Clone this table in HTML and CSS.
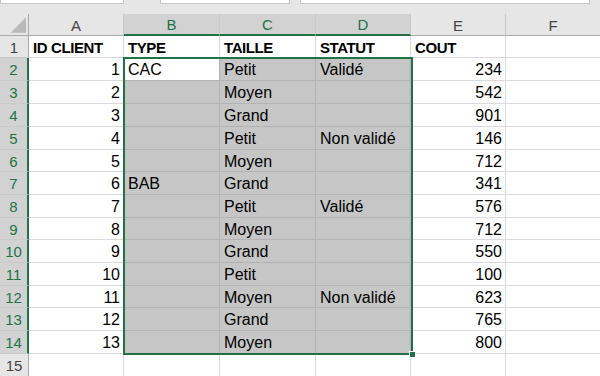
FILE: index.html
```html
<!DOCTYPE html>
<html>
<head>
   <meta charset="UTF-8">
   <title>Classeur</title>
   <link rel="stylesheet" href="styles.css">
</head>
<body>
   <div class="formula-strip">
       <div class="box name-box"></div>
       <div class="box fx-box"></div>
       <div class="box bar-box"></div>
   </div>

   <div class="sheet">
       <!-- column headers -->
       <div class="hd corner">
           <svg width="29" height="22" viewBox="0 0 29 22"><polygon points="27,3 27,19 11,19" fill="#b9b9b9"/></svg>
       </div>
       <div class="hd col">A</div>
       <div class="hd col sel">B</div>
       <div class="hd col sel">C</div>
       <div class="hd col sel">D</div>
       <div class="hd col">E</div>
       <div class="hd col">F</div>

       <!-- row 1 -->
       <div class="hd row">1</div>
       <div class="c b">ID CLIENT</div>
       <div class="c b">TYPE</div>
       <div class="c b">TAILLE</div>
       <div class="c b">STATUT</div>
       <div class="c b">COUT</div>
       <div class="c"></div>

       <div class="hd row sel">2</div>
       <div class="c n">1</div>
       <div class="c active">CAC</div>
       <div class="c s">Petit</div>
       <div class="c s">Validé</div>
       <div class="c n">234</div>
       <div class="c"></div>

       <div class="hd row sel">3</div>
       <div class="c n">2</div>
       <div class="c s"></div>
       <div class="c s">Moyen</div>
       <div class="c s"></div>
       <div class="c n">542</div>
       <div class="c"></div>

       <div class="hd row sel">4</div>
       <div class="c n">3</div>
       <div class="c s"></div>
       <div class="c s">Grand</div>
       <div class="c s"></div>
       <div class="c n">901</div>
       <div class="c"></div>

       <div class="hd row sel">5</div>
       <div class="c n">4</div>
       <div class="c s"></div>
       <div class="c s">Petit</div>
       <div class="c s">Non validé</div>
       <div class="c n">146</div>
       <div class="c"></div>

       <div class="hd row sel">6</div>
       <div class="c n">5</div>
       <div class="c s"></div>
       <div class="c s">Moyen</div>
       <div class="c s"></div>
       <div class="c n">712</div>
       <div class="c"></div>

       <div class="hd row sel">7</div>
       <div class="c n">6</div>
       <div class="c s">BAB</div>
       <div class="c s">Grand</div>
       <div class="c s"></div>
       <div class="c n">341</div>
       <div class="c"></div>

       <div class="hd row sel">8</div>
       <div class="c n">7</div>
       <div class="c s"></div>
       <div class="c s">Petit</div>
       <div class="c s">Validé</div>
       <div class="c n">576</div>
       <div class="c"></div>

       <div class="hd row sel">9</div>
       <div class="c n">8</div>
       <div class="c s"></div>
       <div class="c s">Moyen</div>
       <div class="c s"></div>
       <div class="c n">712</div>
       <div class="c"></div>

       <div class="hd row sel">10</div>
       <div class="c n">9</div>
       <div class="c s"></div>
       <div class="c s">Grand</div>
       <div class="c s"></div>
       <div class="c n">550</div>
       <div class="c"></div>

       <div class="hd row sel">11</div>
       <div class="c n">10</div>
       <div class="c s"></div>
       <div class="c s">Petit</div>
       <div class="c s"></div>
       <div class="c n">100</div>
       <div class="c"></div>

       <div class="hd row sel">12</div>
       <div class="c n">11</div>
       <div class="c s"></div>
       <div class="c s">Moyen</div>
       <div class="c s">Non validé</div>
       <div class="c n">623</div>
       <div class="c"></div>

       <div class="hd row sel">13</div>
       <div class="c n">12</div>
       <div class="c s"></div>
       <div class="c s">Grand</div>
       <div class="c s"></div>
       <div class="c n">765</div>
       <div class="c"></div>

       <div class="hd row sel">14</div>
       <div class="c n">13</div>
       <div class="c s"></div>
       <div class="c s">Moyen</div>
       <div class="c s"></div>
       <div class="c n">800</div>
       <div class="c"></div>

       <div class="hd row">15</div>
       <div class="c"></div>
       <div class="c"></div>
       <div class="c"></div>
       <div class="c"></div>
       <div class="c"></div>
       <div class="c"></div>

       <!-- selection B2:D14 -->
       <div class="selection"><span class="handle"></span></div>
   </div>
</body>
</html>
```

FILE: styles.css
```css
* {
    margin: 0;
    padding: 0;
    box-sizing: border-box;
}

body {
    font-family: 'Liberation Sans', Arial, sans-serif;
    font-size: 16px;
    color: #000;
    background-color: #e6e6e6;
    width: 600px;
    height: 376px;
    overflow: hidden;
}

.formula-strip {
    height: 14px;
    display: flex;
    align-items: flex-start;
}

.box {
    height: 4px;
    background: #fff;
    border: 1px solid #c6c6c6;
    border-top: none;
}

.name-box {
    width: 124px;
    margin-right: 36px;
}

.fx-box {
    width: 130px;
    margin-right: 10px;
}

.bar-box {
    width: 290px;
}

.sheet {
    position: relative;
    display: grid;
    grid-template-columns: 29px 95px 96px 96px 95px 95px 95px;
    grid-template-rows: 22px 22px 23px 23px 23px 23px 22px 23px 23px 22px 23px 23px 22px 23px 23px 23px;
    width: 601px;
}

/* headers */
.hd {
    background: #e6e6e6;
    color: #444;
    font-size: 15px;
    display: flex;
    align-items: center;
    justify-content: center;
    border-right: 1px solid #c9c9c9;
    border-bottom: 1px solid #c9c9c9;
}

.hd.col {
    border-bottom-color: #ababab;
    padding-top: 1px;
}

.hd.corner {
    border-bottom-color: #ababab;
    border-right-color: #ababab;
}

.hd.corner svg {
    display: block;
}

.hd.row {
    border-right-color: #ababab;
    padding-top: 1px;
}

.hd.sel {
    background: #d2d2d2;
    color: #217346;
}

.hd.col.sel {
    border-bottom: 2px solid #217346;
}

.hd.row.sel {
    border-right: 2px solid #217346;
}

/* cells */
.c {
    background: #fff;
    border-right: 1px solid #dadada;
    border-bottom: 1px solid #dadada;
    padding: 2px 3px 0 4px;
    line-height: 20px;
    white-space: nowrap;
    overflow: hidden;
}

.c.b {
    font-weight: bold;
    font-size: 15px;
    letter-spacing: -0.4px;
}

.c.n {
    text-align: right;
}

.c.s {
    background: #c6c6c6;
    border-right-color: #b3b3b3;
    border-bottom-color: #b3b3b3;
}

.c.active {
    border-right-color: #b3b3b3;
    border-bottom-color: #b3b3b3;
}

.selection {
    position: absolute;
    left: 123px;
    top: 43px;
    width: 290px;
    height: 298px;
    border: 2px solid #217346;
    pointer-events: none;
}

.handle {
    position: absolute;
    right: -5px;
    bottom: -5px;
    width: 7px;
    height: 7px;
    background: #217346;
    border: 1px solid #fff;
}
```
